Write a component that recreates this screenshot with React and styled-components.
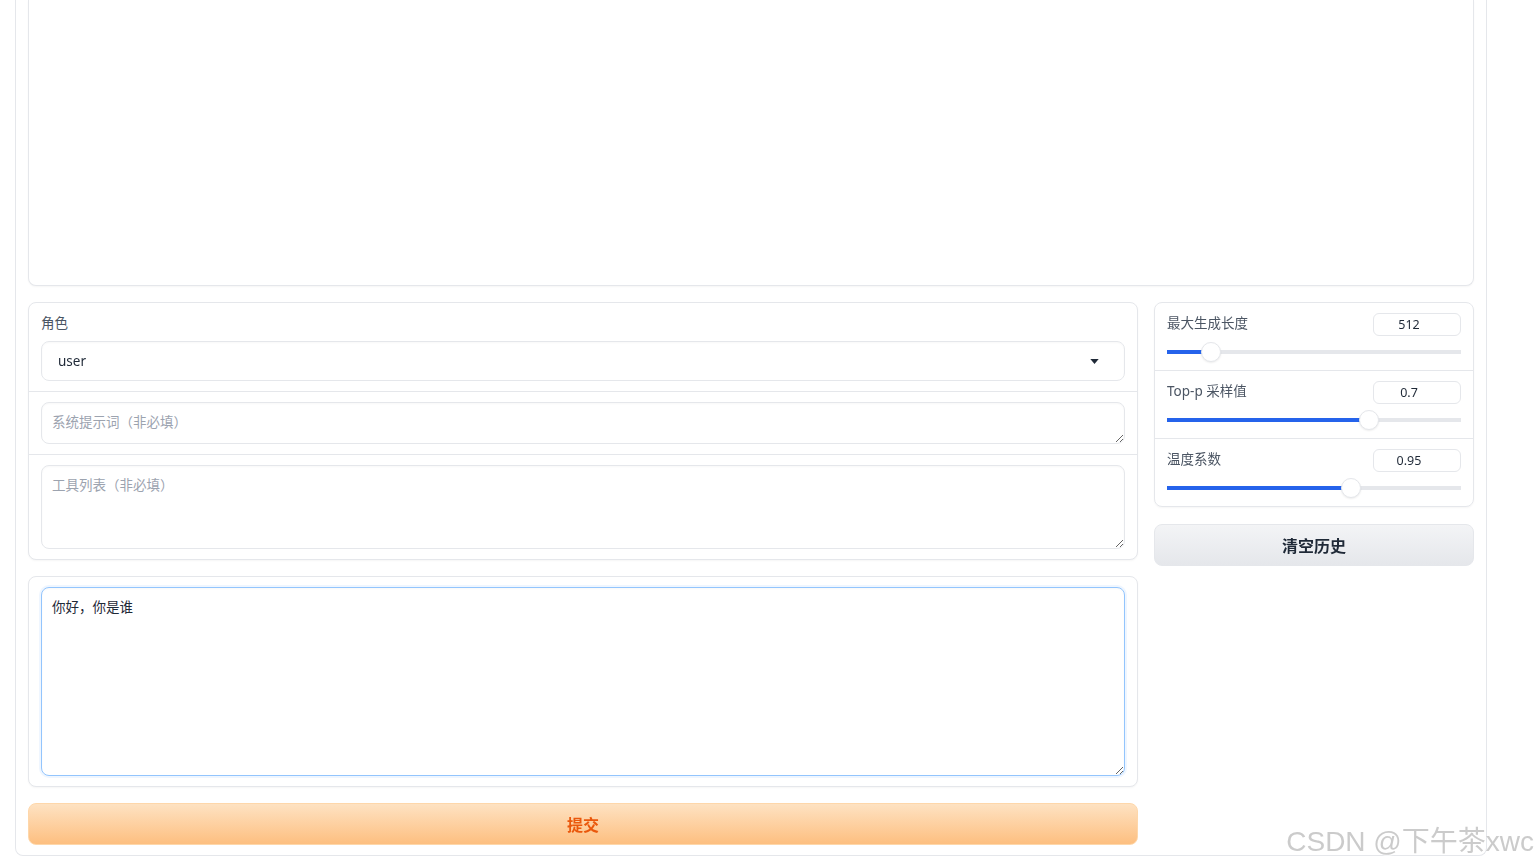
import React, { useEffect, useRef, useState } from "react";
import styled, { createGlobalStyle } from "styled-components";

const GlobalStyle = createGlobalStyle`
  html, body {
    margin: 0;
    padding: 0;
    background: #ffffff;
    overflow: hidden;
  }
  body {
    font-family: "Noto Sans", "Noto Sans CJK SC", sans-serif;
    color: #1f2937;
  }
  * {
    box-sizing: border-box;
  }
`;

const sliders = [
  { label: "最大生成长度", min: 0, max: 4096, step: 1, value: 512 },
  { label: "Top-p 采样值", min: 0, max: 1, step: 0.01, value: 0.7 },
  { label: "温度系数", min: 0, max: 1.5, step: 0.01, value: 0.95 },
];

export default function App() {
  const [role, setRole] = useState("user");
  const [query, setQuery] = useState("你好，你是谁");
  const [params, setParams] = useState(sliders.map((s) => s.value));
  const queryRef = useRef(null);

  // focus the query box with the cursor after the text
  useEffect(() => {
    const el = queryRef.current;
    if (el) {
      el.focus();
      el.setSelectionRange(el.value.length, el.value.length);
    }
  }, []);

  const setParam = (i, v) =>
    setParams((prev) => prev.map((p, j) => (j === i ? v : p)));

  return (
    <>
      <GlobalStyle />
      <Page>
        <Container>
          <Chatbot />
          <MainRow>
            <LeftColumn>
              <Block>
                <FormItem>
                  <Label>角色</Label>
                  <SelectWrap>
                    <Select value={role} onChange={(e) => setRole(e.target.value)}>
                      <option value="user">user</option>
                      <option value="system">system</option>
                      <option value="assistant">assistant</option>
                    </Select>
                    <Caret viewBox="0 0 10 6">
                      <path d="M0 0 L10 0 L5 6 Z" fill="#1f2937" />
                    </Caret>
                  </SelectWrap>
                </FormItem>
                <FormItem>
                  <TextArea placeholder="系统提示词（非必填）" height={42} />
                </FormItem>
                <FormItem>
                  <TextArea placeholder="工具列表（非必填）" height={84} />
                </FormItem>
              </Block>
              <Block>
                <FormItem>
                  <TextArea
                    ref={queryRef}
                    value={query}
                    onChange={(e) => setQuery(e.target.value)}
                    height={189}
                    focused
                  />
                </FormItem>
              </Block>
              <SubmitButton>提交</SubmitButton>
            </LeftColumn>
            <RightColumn>
              <Block>
                {sliders.map((s, i) => {
                  const pct = (params[i] - s.min) / (s.max - s.min);
                  const stop = `calc(10px + ${pct} * (100% - 20px))`;
                  return (
                    <SliderItem key={s.label}>
                      <SliderHead>
                        <Label>{s.label}</Label>
                        <NumberBox
                          type="number"
                          value={params[i]}
                          step={s.step}
                          onChange={(e) => setParam(i, Number(e.target.value))}
                        />
                      </SliderHead>
                      <Range
                        type="range"
                        min={s.min}
                        max={s.max}
                        step={s.step}
                        value={params[i]}
                        onChange={(e) => setParam(i, Number(e.target.value))}
                        style={{
                          background: `linear-gradient(to right, #2563eb 0%, #2563eb ${stop}, #e5e7eb ${stop}, #e5e7eb 100%) no-repeat center / 100% 4px`,
                        }}
                      />
                    </SliderItem>
                  );
                })}
              </Block>
              <ClearButton>清空历史</ClearButton>
            </RightColumn>
          </MainRow>
        </Container>
        <Watermark>CSDN @下午茶xwc</Watermark>
      </Page>
    </>
  );
}

const Page = styled.div`
  padding-left: 15px;
  width: 1535px;
  height: 867px;
`;

const Container = styled.div`
  width: 1472px;
  border: 1px solid #e5e7eb;
  border-top: none;
  border-radius: 0 0 8px 8px;
  padding: 0 12px 10px;
  display: flex;
  flex-direction: column;
  gap: 16px;
`;

const Chatbot = styled.div`
  height: 286px;
  border: 1px solid #e5e7eb;
  border-top: none;
  border-radius: 0 0 8px 8px;
  background: #fff;
  box-shadow: 0 1px 2px rgba(0, 0, 0, 0.04);
`;

const MainRow = styled.div`
  display: grid;
  grid-template-columns: 1fr 320px;
  gap: 16px;
  align-items: start;
`;

const LeftColumn = styled.div`
  display: flex;
  flex-direction: column;
  gap: 16px;
`;

const RightColumn = styled.div`
  display: flex;
  flex-direction: column;
  gap: 17px;
`;

const Block = styled.div`
  border: 1px solid #e5e7eb;
  border-radius: 8px;
  background: #fff;
  box-shadow: 0 1px 2px rgba(0, 0, 0, 0.04);
  display: flex;
  flex-direction: column;

  & > * + * {
    border-top: 1px solid #e5e7eb;
  }
`;

const FormItem = styled.div`
  padding: 10px 12px;
  display: flex;
  flex-direction: column;
  gap: 8px;
`;

const Label = styled.span`
  font-size: 13.5px;
  line-height: 20px;
  color: #4b5563;
`;

const SelectWrap = styled.div`
  position: relative;
  height: 40px;
`;

const Select = styled.select`
  appearance: none;
  width: 100%;
  height: 40px;
  border: 1px solid #e5e7eb;
  border-radius: 8px;
  background: #fff;
  box-shadow: inset 0 1px 2px rgba(0, 0, 0, 0.03);
  padding: 0 16px;
  font-family: "Noto Sans", "Noto Sans CJK SC", sans-serif;
  font-size: 13.5px;
  color: #1f2937;
  outline: none;
`;

const Caret = styled.svg`
  position: absolute;
  right: 26px;
  top: 18px;
  width: 9px;
  height: 5px;
  pointer-events: none;
`;

const TextArea = styled.textarea`
  width: 100%;
  height: ${(p) => p.height}px;
  resize: vertical;
  border: 1px solid ${(p) => (p.focused ? "#93c5fd" : "#e5e7eb")};
  border-radius: 8px;
  box-shadow: ${(p) =>
    p.focused
      ? "0 0 0 2px #eff6ff, inset 0 1px 2px rgba(0,0,0,0.03)"
      : "inset 0 1px 2px rgba(0,0,0,0.03)"};
  padding: 9px 10px;
  font-family: "Noto Sans", "Noto Sans CJK SC", sans-serif;
  font-size: 13.5px;
  line-height: 20px;
  color: #1f2937;
  outline: none;
  display: block;
  caret-color: #111827;

  &::placeholder {
    color: #9ca3af;
  }
`;

const SubmitButton = styled.button`
  height: 42px;
  border: 1px solid #fed7aa;
  border-radius: 8px;
  background: linear-gradient(to bottom, #fee2c2, #fdbf80);
  color: #ea580c;
  font-family: "Noto Sans", "Noto Sans CJK SC", sans-serif;
  font-size: 16px;
  font-weight: 600;
  cursor: pointer;
`;

const SliderItem = styled.div`
  padding: 10px 12px 8px;
  display: flex;
  flex-direction: column;
  gap: 5px;
`;

const SliderHead = styled.div`
  display: flex;
  justify-content: space-between;
  align-items: flex-start;
  height: 24px;
`;

const NumberBox = styled.input`
  width: 88px;
  height: 23px;
  border: 1px solid #e5e7eb;
  border-radius: 6px;
  padding: 0 16px 0 0;
  text-align: center;
  font-family: "Noto Sans", "Noto Sans CJK SC", sans-serif;
  font-size: 12.5px;
  color: #1f2937;
  outline: none;
  -moz-appearance: textfield;

  &::-webkit-outer-spin-button,
  &::-webkit-inner-spin-button {
    -webkit-appearance: none;
    margin: 0;
  }
`;

const Range = styled.input`
  -webkit-appearance: none;
  appearance: none;
  width: 100%;
  height: 20px;
  margin: 0;
  border-radius: 4px;
  cursor: pointer;

  &::-webkit-slider-runnable-track {
    height: 20px;
    background: transparent;
  }

  &::-webkit-slider-thumb {
    -webkit-appearance: none;
    width: 20px;
    height: 20px;
    border-radius: 50%;
    background: #fff;
    border: 1px solid #e5e7eb;
    box-shadow: 0 1px 2px rgba(0, 0, 0, 0.08);
  }
`;

const ClearButton = styled.button`
  height: 42px;
  border: 1px solid #e5e7eb;
  border-radius: 8px;
  background: linear-gradient(to bottom, #f3f4f6, #e5e7eb);
  color: #1f2937;
  font-family: "Noto Sans", "Noto Sans CJK SC", sans-serif;
  font-size: 16px;
  font-weight: 600;
  cursor: pointer;
`;

const Watermark = styled.div`
  position: fixed;
  right: 1px;
  bottom: 8px;
  font-family: "Liberation Sans", "Noto Sans CJK SC", sans-serif;
  font-size: 28px;
  color: rgba(160, 160, 160, 0.55);
  text-shadow: 1px 1px 1px rgba(255, 255, 255, 0.9);
  white-space: nowrap;
  pointer-events: none;
`;
